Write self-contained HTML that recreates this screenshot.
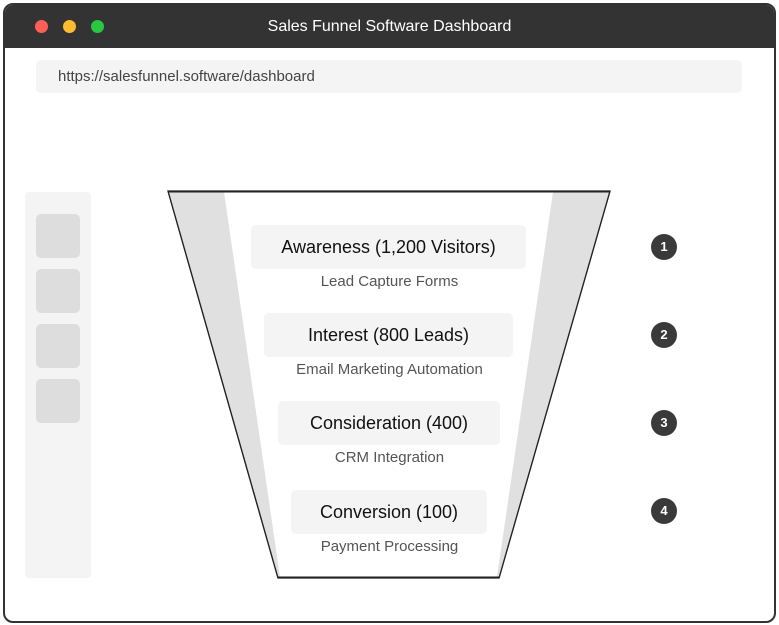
<!DOCTYPE html>
<html><head><style>
*{margin:0;padding:0;box-sizing:border-box}
body{width:779px;height:625px;background:#fff;font-family:"Liberation Sans",sans-serif;position:relative;overflow:hidden}
.win{position:absolute;left:3px;top:3px;width:773px;height:620px;border:2px solid #333;border-radius:10px;overflow:hidden}
.bar{position:absolute;left:0;top:0;width:100%;height:43px;background:#333;color:#fff;font-size:16px;text-align:center;line-height:44px}
.dot{position:absolute;top:15px;width:13px;height:13px;border-radius:50%}
.url{position:absolute;left:31px;top:55px;width:706px;height:33px;background:#f4f4f4;border-radius:5px;font-size:15px;color:#444;padding-left:22px;line-height:33px}
.side{position:absolute;left:25px;top:192px;width:66px;height:386px;background:#f4f4f4;border-radius:4px}
.sq{position:absolute;left:11px;width:44px;height:44px;background:#ddd;border-radius:5px}
.box{position:absolute;background:#f4f4f4;border-radius:5px;font-size:18px;color:#111;text-align:center;line-height:44px;height:44px}
.sub{position:absolute;left:0;width:779px;text-align:center;font-size:15px;color:#555}
.c{position:absolute;left:651px;width:26px;height:26px;border-radius:50%;background:#3a3a3a;color:#fff;font-size:13px;font-weight:bold;text-align:center;line-height:26px}
</style></head><body>
<svg width="779" height="625" style="position:absolute;left:0;top:0">
<polygon points="168,191 610,191 499,578 278,578" fill="#fff" stroke="#222" stroke-width="1.3"/>
<polygon points="168.7,192 224,192 280,577 278.3,577" fill="#e0e0e0"/>
<polygon points="553,192 609.3,192 499.3,577 497,577" fill="#e0e0e0"/>
<line x1="168" y1="191.5" x2="610" y2="191.5" stroke="#222" stroke-width="2"/>
<line x1="278" y1="577.5" x2="499" y2="577.5" stroke="#222" stroke-width="2"/>
<line x1="168" y1="191" x2="278" y2="578" stroke="#222" stroke-width="1.3"/>
<line x1="610" y1="191" x2="499" y2="578" stroke="#222" stroke-width="1.3"/>
</svg>
<div class="win">
<div class="bar">Sales Funnel Software Dashboard
<div class="dot" style="left:30px;background:#ff5f57"></div>
<div class="dot" style="left:58px;background:#febc2e"></div>
<div class="dot" style="left:86px;background:#28c840"></div></div>
<div class="url">https://salesfunnel.software/dashboard</div>
</div>
<div class="side">
<div class="sq" style="top:22px"></div><div class="sq" style="top:77px"></div><div class="sq" style="top:132px"></div><div class="sq" style="top:187px"></div>
</div>
<div class="box" style="left:251px;top:225px;width:275px">Awareness (1,200 Visitors)</div>
<div class="sub" style="top:273px">Lead Capture Forms</div>
<div class="box" style="left:264px;top:313px;width:249px">Interest (800 Leads)</div>
<div class="sub" style="top:361px">Email Marketing Automation</div>
<div class="box" style="left:278px;top:401px;width:222px">Consideration (400)</div>
<div class="sub" style="top:449px">CRM Integration</div>
<div class="box" style="left:291px;top:490px;width:196px">Conversion (100)</div>
<div class="sub" style="top:538px">Payment Processing</div>
<div class="c" style="top:234px">1</div>
<div class="c" style="top:322px">2</div>
<div class="c" style="top:410px">3</div>
<div class="c" style="top:498px">4</div>
</body></html>
